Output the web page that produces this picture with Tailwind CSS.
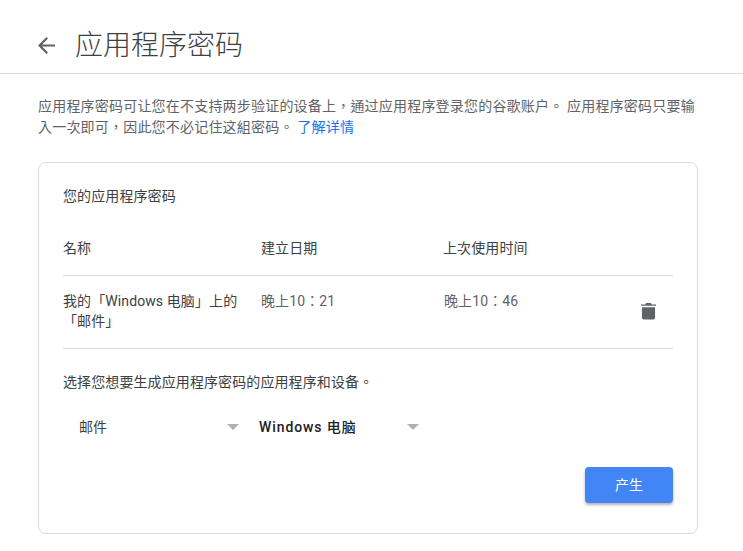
<!DOCTYPE html>
<html lang="zh-TW">
<head>
  <meta charset="UTF-8" />
  <title>应用程序密码</title>
  <script src="https://cdn.jsdelivr.net/npm/@tailwindcss/browser@4"></script>
</head>
<body class="bg-white h-[551px] overflow-hidden font-['Roboto','Noto_Sans_CJK_TC',sans-serif] text-[#5f6368]">
  <header class="h-[74px] border-b border-[#dadce0] flex items-center pl-[38px] pt-[18px]">
    <svg class="w-[17px] h-[17px] text-[#5f6368]" viewBox="0 0 16 16" fill="currentColor">
      <path d="M16 7H3.83l5.59-5.59L8 0 0 8l8 8 1.410-1.410L3.830 9H16z" />
    </svg>
    <h1 class="ml-[20px] text-[28px] leading-[36px] text-[#3c4043] font-light">应用程序密码</h1>
  </header>

  <p class="mx-[38px] mt-[22px] text-[14px] leading-[21px] tracking-[0.2px]">应用程序密码可让您在不支持两步验证的设备上，通过应用程序登录您的谷歌账户。 应用程序密码只要输入一次即可，因此您不必记住这組密码。 <a class="text-[#1a73e8]" href="#">了解详情</a></p>

  <section class="ml-[38px] mr-[45px] mt-[24px] h-[372px] border border-[#dadce0] rounded-lg px-[24px] pt-[23px] text-[14px] tracking-[0.1px]">
    <div class="leading-[20px] text-[#3c4043]">您的应用程序密码</div>

    <div class="grid grid-cols-[198px_182px_1fr] mt-[32px] h-[38px] border-b border-[#dadce0] text-[#3c4043] leading-[20px]">
      <div>名称</div>
      <div>建立日期</div>
      <div>上次使用时间</div>
    </div>

    <div class="grid grid-cols-[198px_183px_1fr_50px] h-[73px] border-b border-[#dadce0] pt-[15px] leading-[20px]">
      <div class="text-[#3c4043] pr-[10px]">我的「Windows 电脑」上的「邮件」</div>
      <div>晚上10：21</div>
      <div>晚上10：46</div>
      <div class="flex justify-end pr-[17px] pt-[11px]">
        <svg class="w-[15px] h-[18px] text-[#5f6368]" viewBox="0 0 16 18" fill="currentColor">
          <path d="M1 5h14v11a2 2 0 0 1-2 2H3a2 2 0 0 1-2-2zM0 2h4.500l1-1.500h5l1 1.500H16v1.500H0z" />
        </svg>
      </div>
    </div>

    <div class="mt-[23px] leading-[20px] text-[#3c4043]">选择您想要生成应用程序密码的应用程序和设备。</div>

    <div class="flex mt-[25px] h-[20px] leading-[20px] items-center">
      <div class="w-[196px] pl-[16px] flex items-center justify-between pr-[20px] text-[#3c4043]">
        <span>邮件</span>
        <span class="w-0 h-0 border-x-[6px] border-x-transparent border-t-[6px] border-t-[#b0b0b0]"></span>
      </div>
      <div class="w-[160px] flex items-center justify-between text-[#202124] font-medium">
        <span class="tracking-[0.9px]">Windows 电脑</span>
        <span class="w-0 h-0 border-x-[6px] border-x-transparent border-t-[6px] border-t-[#b0b0b0]"></span>
      </div>
    </div>

    <div class="flex justify-end mt-[30px]">
      <button class="w-[88px] h-[36px] bg-[#4285f4] text-white text-[14px] rounded-[4px] shadow-[0_2px_3px_rgba(0,0,0,0.3)]">产生</button>
    </div>
  </section>
</body>
</html>
